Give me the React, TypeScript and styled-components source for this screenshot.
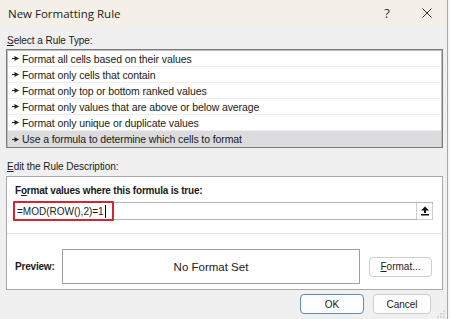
import React from "react";
import styled, { createGlobalStyle } from "styled-components";

const Global = createGlobalStyle`
  html, body { margin: 0; padding: 0; background: #f7f7f7; }
  #root { width: 450px; height: 319px; overflow: hidden; }
  * { box-sizing: border-box; }
`;

const Window = styled.div`
  width: 448px;
  height: 319px;
  background: #f0f0f0;
  border-right: 1px solid #a9a9a9;
  font-family: "Liberation Sans", Arial, sans-serif;
  font-size: 11px;
  color: #1a1a1a;
  display: flex;
  flex-direction: column;
  position: relative;
`;

const TitleBar = styled.div`
  flex-shrink: 0;
  height: 27px;
  background: #f5f0e7;
  display: flex;
  align-items: center;
  padding: 0 0 1px 8px;
  font-family: "Open Sans", "Noto Sans", sans-serif;
  font-size: 11.5px;
  color: #222;
`;

const TitleText = styled.div`
  flex: 1;
`;

const TitleIcon = styled.div`
  width: 40px;
  display: flex;
  justify-content: center;
  align-items: center;
  font-size: 13px;
  color: #333;
`;

const Body = styled.div`
  display: flex;
  flex-direction: column;
  padding: 0 4px 0 6px;
  & > * { flex-shrink: 0; }
`;

const SectionLabel = styled.div<{ $top: number; $bottom: number }>`
  margin-top: ${(p) => p.$top}px;
  margin-bottom: ${(p) => p.$bottom}px;
  height: 14px;
  line-height: 14px;
  padding-left: 1px;
  font-size: 10px;
  letter-spacing: -0.05px;
`;

const U = styled.span`
  text-decoration: underline;
  text-underline-offset: 1px;
`;

const ListBox = styled.div`
  height: 99px;
  background: #fff;
  border: 1px solid #7b7b7b;
  box-shadow: inset 0 0 0 1px #bdbdbd;
  padding: 1px 1px 0 1px;
  display: flex;
  flex-direction: column;
`;

const Row = styled.div<{ $selected?: boolean }>`
  height: 16px;
  flex-shrink: 0;
  display: flex;
  align-items: center;
  gap: 3px;
  padding-left: 4px;
  font-size: 10.5px;
  letter-spacing: -0.1px;
  background: ${(p) => (p.$selected ? "#dcdcdf" : "#fff")};
  border-bottom: ${(p) => (p.$selected ? "none" : "1px solid #eeeeee")};
`;

const Arrow = () => (
  <svg width="7" height="5" viewBox="0 0 7 5">
    <rect x="0" y="2" width="3.5" height="1" fill="#222" />
    <polygon points="2.5,0 7,2.5 2.5,5" fill="#222" />
  </svg>
);

const DescBox = styled.div`
  height: 114px;
  background: #fff;
  border: 1px solid #a8a8a8;
  display: flex;
  flex-direction: column;
  & > * { flex-shrink: 0; }
`;

const BoldLabel = styled.div`
  font-weight: bold;
  font-size: 10px;
  letter-spacing: -0.2px;
  margin: 7px 0 0 8px;
  height: 13px;
  line-height: 13px;
`;

const InputRow = styled.div`
  margin: 5px 9px 0 6px;
  height: 18px;
  border: 1px solid #b4b4b4;
  display: flex;
  align-items: center;
  position: relative;
`;

const Highlight = styled.div`
  position: absolute;
  left: -1px;
  top: -2px;
  width: 101px;
  height: 20px;
  border: 2px solid #d32635;
  border-radius: 1px;
`;

const InputText = styled.div`
  flex: 1;
  padding-left: 3px;
  display: flex;
  align-items: center;
  font-size: 10px;
`;

const Caret = styled.span`
  display: inline-block;
  width: 1px;
  height: 13px;
  background: #000;
  margin-left: 1px;
`;

const CollapseBtn = styled.div`
  width: 16px;
  height: 16px;
  border-left: 1px solid #d0d0d0;
  box-shadow: 1px 1px 0 #cfcfcf;
  display: flex;
  align-items: center;
  justify-content: center;
  background: #fff;
`;

const Separator = styled.div`
  margin: 13px 1px 0 0;
  height: 1px;
  background: #e2e2e2;
`;

const PreviewRow = styled.div`
  display: flex;
  align-items: center;
  margin-top: 15px;
  padding-left: 8px;
`;

const PreviewLabel = styled.div`
  font-weight: bold;
  font-size: 10px;
  letter-spacing: -0.2px;
  width: 47px;
`;

const PreviewBox = styled.div`
  width: 298px;
  height: 35px;
  border: 1px solid #a0a0a0;
  display: flex;
  align-items: center;
  justify-content: center;
  font-size: 11.5px;
  color: #222;
`;

const Button = styled.div<{ $w: number; $default?: boolean }>`
  width: ${(p) => p.$w}px;
  height: 20px;
  border: 1px solid ${(p) => (p.$default ? "#5f8eb3" : "#cdcdcd")};
  border-radius: 4px;
  background: #fdfdfd;
  display: flex;
  align-items: center;
  justify-content: center;
  font-size: 10px;
  color: #222;
`;

const FormatBtn = styled(Button)`
  margin-left: 9px;
`;

const Footer = styled.div`
  display: flex;
  justify-content: flex-end;
  gap: 9px;
  margin-top: 4px;
  padding-right: 12px;
`;

const Grip = styled.div`
  position: absolute;
  right: 2px;
  bottom: 3px;
  width: 8px;
  height: 8px;
`;

const rules = [
  "Format all cells based on their values",
  "Format only cells that contain",
  "Format only top or bottom ranked values",
  "Format only values that are above or below average",
  "Format only unique or duplicate values",
  "Use a formula to determine which cells to format",
];

export default function App() {
  return (
    <>
      <Global />
      <Window>
        <TitleBar>
          <TitleText>New Formatting Rule</TitleText>
          <TitleIcon>?</TitleIcon>
          <TitleIcon>
            <svg width="10" height="10" viewBox="0 0 10 10">
              <path d="M0.5 0.5 L9.5 9.5 M9.5 0.5 L0.5 9.5" stroke="#333" strokeWidth="1" />
            </svg>
          </TitleIcon>
        </TitleBar>
        <Body>
          <SectionLabel $top={7} $bottom={1}>
            <U>S</U>elect a Rule Type:
          </SectionLabel>
          <ListBox>
            {rules.map((r, i) => (
              <Row key={r} $selected={i === rules.length - 1}>
                <Arrow />
                <span>{r}</span>
              </Row>
            ))}
          </ListBox>
          <SectionLabel $top={12} $bottom={2}>
            <U>E</U>dit the Rule Description:
          </SectionLabel>
          <DescBox>
            <BoldLabel>
              F<U>o</U>rmat values where this formula is true:
            </BoldLabel>
            <InputRow>
              <Highlight />
              <InputText>
                =MOD(ROW(),2)=1
                <Caret />
              </InputText>
              <CollapseBtn>
                <svg width="10" height="10" viewBox="0 0 10 10">
                  <polygon points="5,0.5 9,4.5 1,4.5" fill="#111" />
                  <rect x="4" y="4" width="2" height="3" fill="#111" />
                  <rect x="1" y="8" width="8" height="1.5" fill="#111" />
                </svg>
              </CollapseBtn>
            </InputRow>
            <Separator />
            <PreviewRow>
              <PreviewLabel>Preview:</PreviewLabel>
              <PreviewBox>No Format Set</PreviewBox>
              <FormatBtn $w={63}>
                <span>
                  <U>F</U>ormat...
                </span>
              </FormatBtn>
            </PreviewRow>
          </DescBox>
          <Footer>
            <Button $w={64} $default>
              OK
            </Button>
            <Button $w={58}>Cancel</Button>
          </Footer>
        </Body>
        <Grip>
          <svg width="8" height="8" viewBox="0 0 8 8">
            <circle cx="7" cy="1" r="0.7" fill="#b0b0b0" />
            <circle cx="7" cy="4" r="0.7" fill="#b0b0b0" />
            <circle cx="4" cy="4" r="0.7" fill="#b0b0b0" />
            <circle cx="7" cy="7" r="0.7" fill="#b0b0b0" />
            <circle cx="4" cy="7" r="0.7" fill="#b0b0b0" />
            <circle cx="1" cy="7" r="0.7" fill="#b0b0b0" />
          </svg>
        </Grip>
      </Window>
    </>
  );
}
